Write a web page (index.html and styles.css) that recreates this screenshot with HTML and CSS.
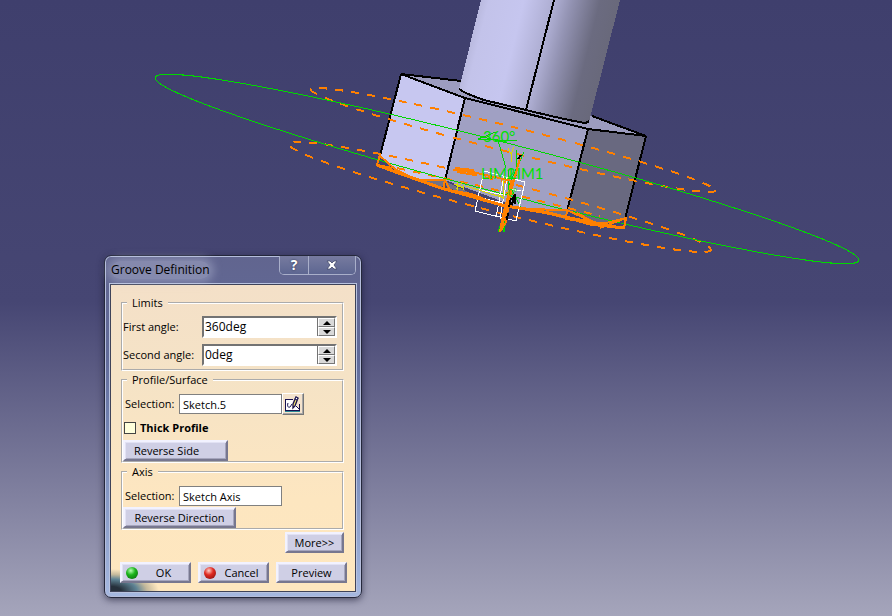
FILE: index.html
```html
<!DOCTYPE html>
<html lang="en">
<head>
    <meta charset="UTF-8">
    <meta name="viewport" content="width=device-width, initial-scale=1.0">
    <title>Groove Definition</title>

    <link rel="stylesheet" href="styles.css">
</head>
<body>

<main class="workspace">

    <!-- 3D view -->
    <svg class="viewport" viewBox="0 0 892 616" preserveAspectRatio="xMidYMid slice" aria-label="Bolt model">
        <defs>
            <linearGradient id="shaft" gradientUnits="userSpaceOnUse" x1="468" y1="50" x2="606" y2="84">
                <stop offset="0" stop-color="#b9b9de"/>
                <stop offset="0.06" stop-color="#c3c3ea"/>
                <stop offset="0.3" stop-color="#c6c6ef"/>
                <stop offset="0.52" stop-color="#acacd0"/>
                <stop offset="0.62" stop-color="#9494b4"/>
                <stop offset="0.82" stop-color="#6b6b80"/>
                <stop offset="1" stop-color="#686879"/>
            </linearGradient>
        </defs>

        <!-- bolt head -->
        <path fill="#9c9cbf" d="M401 74L461 81L592 116L646 136L588 129L465 98Z"/>
        <path fill="#c7c7f0" d="M401 74L465 98L445 180L415 179L396 169L380 156Z"/>
        <path fill="#a0a0c3" d="M465 98L588 129L567 211L520 208L445 180Z"/>
        <path fill="#696980" d="M588 129L646 136L625 219L597 224L567 211Z"/>
        <path fill="#727286" d="M417 180L445 181L441 189ZM445 181L472 194L447 188ZM524 208L567 211L565 219Z"/>

        <!-- shaft -->
        <path fill="url(#shaft)" d="M481 0H620L589 122Q575 122 526 110L484 100Q466 94 459 89Z"/>
        <g class="edge">
            <path d="M461 81L401 74L465 98L588 129L646 136L592 116"/>
            <path d="M401 74L380 156M465 98L445 180M588 129L567 211M646 136L625 219"/>
            <path d="M554 0L526 110M459 89Q466 94 484 100L526 110Q575 122 586 123L589 121"/>
        </g>

        <!-- groove circles -->
        <g class="dash">
            <ellipse rx="202" ry="13" transform="translate(513 140) skewY(14)"/>
            <ellipse rx="211" ry="16" transform="translate(500 197) skewY(14)"/>
            <path d="M397 168L480 186L600 216"/>
        </g>
        <g class="green">
            <ellipse rx="352" ry="26" transform="translate(507 169) skewY(14.5)"/>
            <path d="M478 139L517 141M478 139L496 132M498 140L506 168M524 152L509 185L503 232M516 150V176M508 170V196M498 232L504 215M504 232L509 200M512 190L521 208"/>
        </g>

        <!-- sketch plane -->
        <g class="plane">
            <path d="M484 171L525 182L516 221L475 211ZM480 190L504 195M478 197L502 203M504 176L496 217M507 178L500 219M510 189L521 191"/>
        </g>

        <g class="orange">
            <path d="M380 155L377 165L441 188L505 206L567 217L624 228L626 218L606 223L595 223L567 210L523 209L505 206"/>
            <path d="M380 156L395 169L417 180L445 180L443 189L472 194L496 204M377 165L392 168M445 180L450 190M567 210L566 219L595 223L577 213M626 218L600 228"/>
            <path d="M455 168L512 181L503 215L500 232L506 222L510 195L520 158M457 172L475 175L473 170L455 168"/>
        </g>
        <path class="axis" d="M377 165L390 170L441 188L505 206M512 181L501 230M456 169L472 172M505 206L540 211L565 217L590 224L624 228"/>
        <path class="edge" d="M511 198L509 207M515 194V204M512 205L514 195M508 213L507 220M518 159L521 155"/>
        <g class="yellow">
            <path d="M508 148L511 154L514 147M511 154V162M454 184L464 188M456 189L463 182M457 182V190M463 185V190M466 186L504 198M503 180V198L498 194"/>
        </g>
        <g class="labels">
            <text x="483" y="142">360°</text>
            <text x="481" y="179">LIM2</text>
            <text x="509" y="179">LIM1</text>
            <text x="508" y="196" font-size="9">0°</text>
        </g>
    </svg>

    <form class="dialog" onsubmit="return false">
        <header class="titlebar">
            <h1 class="title">Groove Definition</h1>
            <div class="window-btns">
                <button type="button" class="help" aria-label="Help">?</button>
                <button type="button" class="close" aria-label="Close">
                    <svg width="12" height="10" viewBox="0 0 12 10">
                        <path d="M1 1h3l2 2 2-2h3L8 5l3 4H8L6 7 4 9H1l3-4z" fill="#fff" stroke="#43496a" stroke-width="0.8"/>
                    </svg>
                </button>
            </div>
        </header>

        <div class="panel">
            <fieldset class="group limits">
                <legend>Limits</legend>
                <div class="row">
                    <label for="first">First angle:</label>
                    <div class="spinner">
                        <input type="text" id="first" value="360deg">
                        <div class="arrows">
                            <button type="button" class="arrow up" aria-label="Increase first angle"></button>
                            <button type="button" class="arrow down" aria-label="Decrease first angle"></button>
                        </div>
                    </div>
                </div>
                <div class="row spaced">
                    <label for="second">Second angle:</label>
                    <div class="spinner">
                        <input type="text" id="second" value="0deg">
                        <div class="arrows">
                            <button type="button" class="arrow up" aria-label="Increase second angle"></button>
                            <button type="button" class="arrow down" aria-label="Decrease second angle"></button>
                        </div>
                    </div>
                </div>
            </fieldset>

            <fieldset class="group">
                <legend>Profile/Surface</legend>
                <div class="row select-row">
                    <label for="profile">Selection:</label>
                    <input type="text" id="profile" class="box" value="Sketch.5">
                    <button type="button" class="sketch-btn" aria-label="Sketcher">
                        <svg width="18" height="17" viewBox="0 0 18 17">
                            <path d="M1 15.5h15" stroke="#2a8a96"/>
                            <path d="M1 3h8v1H2v10h13V8h1v7H1z" fill="#17114f"/>
                            <path d="M2 4h7l-1 10H2zM12 8l3 6H8z" fill="#fff"/>
                            <path d="M4 7c-1 3 0 5 2 4l2-3M12 10l3 3" fill="none" stroke="#17114f"/>
                            <path d="M12 1l2 1-3 8-2 2v-4z" fill="#f4e56a" stroke="#17114f" stroke-width="1.3"/>
                            <path d="M12 1l2 1-1 2-2-1z" fill="#fff" stroke="#17114f"/>
                        </svg>
                    </button>
                </div>
                <div class="row check-row">
                    <input type="checkbox" id="thick">
                    <label for="thick">Thick Profile</label>
                </div>
                <button type="button" class="btn side-btn">Reverse Side</button>
            </fieldset>

            <fieldset class="group">
                <legend>Axis</legend>
                <div class="row select-row">
                    <label for="axis">Selection:</label>
                    <input type="text" id="axis" class="box" value="Sketch Axis">
                </div>
                <button type="button" class="btn direction-btn">Reverse Direction</button>
            </fieldset>

            <button type="button" class="btn more-btn">More&gt;&gt;</button>

            <footer class="actions">
                <button type="submit" class="btn"><span class="ball ok"></span><span class="btn-text">OK</span></button>
                <button type="button" class="btn"><span class="ball cancel"></span><span class="btn-text">Cancel</span></button>
                <button type="button" class="btn">Preview</button>
            </footer>
        </div>
    </form>

</main>

</body>
</html>
```

FILE: styles.css
```css
*{
    margin: 0;
    padding: 0;
    box-sizing: border-box;
}

body{
    font-family: "Open Sans", "Noto Sans", sans-serif;
    font-size: 11px;
    line-height: 16px;
    color: black;
}

input, button{
    font: inherit;
    color: inherit;
}

.workspace{
    position: relative;
    min-height: 100vh;
    overflow: hidden;
    background: linear-gradient(#3f3f6d, #464673 49%, #a5a5bb);
}

.viewport{
    position: absolute;
    width: 100%;
    height: 100%;
}

.viewport path, .viewport ellipse{
    shape-rendering: crispEdges;
}

.edge{
    fill: none;
    stroke: black;
    stroke-width: 2;
}

.dash{
    fill: none;
    stroke: #ff8000;
    stroke-width: 2;
    stroke-dasharray: 8 8;
}

.green{
    fill: none;
    stroke: #00d800;
}

.plane{
    fill: none;
    stroke: white;
}

.orange{
    fill: none;
    stroke: #ff8000;
    stroke-width: 2;
}

.axis{
    fill: none;
    stroke: #ff8000;
    stroke-width: 3;
}

.yellow{
    fill: none;
    stroke: #dcdc00;
    stroke-width: 1;
}

.labels{
    fill: #00e000;
    font-family: Lato, sans-serif;
    font-size: 15px;
}

/* dialog window */
.dialog{
    position: absolute;
    left: 104px;
    top: 255px;
    width: 258px;
    padding: 0 5px 5px;
    border: 1px solid #25283c;
    border-radius: 7px;
    background: linear-gradient(#61658f, #626b9a 30%, #7587b5 55%, #a5b8e0);
    box-shadow: inset 0 0 0 1px #b5bddb, 0 2px 7px rgba(20, 20, 45, 0.6);
}

.titlebar{
    display: flex;
    justify-content: space-between;
    height: 28px;
}

.title{
    margin-top: 5px;
    margin-left: 1px;
    height: 18px;
    line-height: 18px;
    font-size: 12px;
    font-weight: normal;
    border-radius: 9px;
    background-color: rgba(200, 205, 228, 0.35);
    box-shadow: 0 0 8px 4px rgba(200, 205, 228, 0.35);
}

.window-btns{
    display: flex;
    height: 19px;
    border: 1px solid #a9afca;
    border-top: none;
    border-radius: 0 0 5px 5px;
}

.window-btns button{
    border: none;
    background: linear-gradient(#777b9f, #5d6691);
    color: white;
    font-weight: bold;
    font-size: 14px;
    line-height: 18px;
}

.help{
    width: 28px;
    border-radius: 0 0 0 4px;
    text-shadow: 0 0 2px #252a48;
}

.window-btns .close{
    width: 47px;
    border-left: 1px solid #a9afca;
    border-radius: 0 0 4px 0;
}

.panel{
    padding: 10px 8px 8px 10px;
    border: 1px solid #3f4359;
    box-shadow: 0 0 0 1px #b9c3df;
    background:
        radial-gradient(ellipse at 0 100%, #26303b 10px, #5e8394 26px, #c4b99c 36px, transparent 48px) left bottom / 48px 22px no-repeat,
        linear-gradient(#f4e0c8, #f5e3c6 30%, #fde6c0 70%, #fee7bf);
}

.group{
    margin-right: 3px;
    margin-bottom: 1px;
    padding: 5px 5px 0 0;
    border: 2px groove white;
}

.limits{
    padding-bottom: 3px;
}

.group legend{
    margin-left: 4px;
    padding: 0 5px;
}

.row{
    display: flex;
    align-items: center;
}

.spaced{
    margin-top: 6px;
}

.spinner{
    display: flex;
    width: 135px;
    height: 22px;
    margin-left: auto;
    border: 2px solid;
    border-color: #737373 white white #737373;
}

.spinner input{
    flex: 1;
    min-width: 0;
    padding-left: 1px;
    border: none;
    background-color: white;
    font-size: 12px;
}

.arrows{
    display: flex;
    flex-direction: column;
    width: 18px;
    border-left: 1px solid #737373;
}

.arrow{
    display: flex;
    flex: 1;
    justify-content: center;
    align-items: center;
    border: 1px solid;
    border-color: white #777 #777 white;
    background-color: #d9d9d9;
}

.arrow::before{
    content: "";
    border: 4px solid transparent;
}

.up::before{
    border-top: none;
    border-bottom-color: black;
}

.down::before{
    border-bottom: none;
    border-top-color: black;
}

.select-row{
    height: 22px;
    padding-left: 2px;
}

.select-row label{
    width: 54px;
}

.box{
    width: 103px;
    height: 20px;
    padding-left: 3px;
    border: 1px solid #808080;
    background-color: white;
}

.sketch-btn{
    width: 22px;
    height: 22px;
    border: 1px solid;
    border-color: white #777 #777 white;
    background-color: #f4e3cd;
    box-shadow: inset -1px -1px #a8a8a8;
}

.sketch-btn svg{
    display: block;
    margin: 0 1px;
}

.check-row{
    height: 15px;
    margin: 5px 0;
    padding-left: 1px;
    gap: 4px;
    font-weight: bold;
}

.check-row input{
    appearance: none;
    width: 12px;
    height: 12px;
    border: 1px solid #444;
    background-color: #ffffdc;
}

/* lilac raised buttons */
.btn{
    display: flex;
    justify-content: center;
    align-items: center;
    height: 21px;
    border: 2px solid;
    border-color: #f2f2ff #77778f #77778f #f2f2ff;
    background-color: #cfcfe5;
    box-shadow: inset 1px 1px #e2e2f4, inset -1px -1px #a5a5bd;
}

.side-btn{
    width: 105px;
    padding-right: 18px;
}

.direction-btn{
    width: 113px;
}

.more-btn{
    width: 59px;
    margin: 2px 3px 0 auto;
}

.actions{
    display: flex;
    justify-content: space-between;
    margin-top: 9px;
    margin-left: -1px;
}

.actions .btn{
    width: 71px;
}

.btn-text{
    flex: 1;
}

.ball{
    width: 12px;
    height: 12px;
    margin-left: 4px;
    border-radius: 50%;
}

.ok{
    background: radial-gradient(circle at 40% 30%, #b5ffb0, #1bb41b 40%, #075f0c);
}

.cancel{
    background: radial-gradient(circle at 40% 30%, #ffd0c8, #e02a22 40%, #7a0d0d);
}
```
